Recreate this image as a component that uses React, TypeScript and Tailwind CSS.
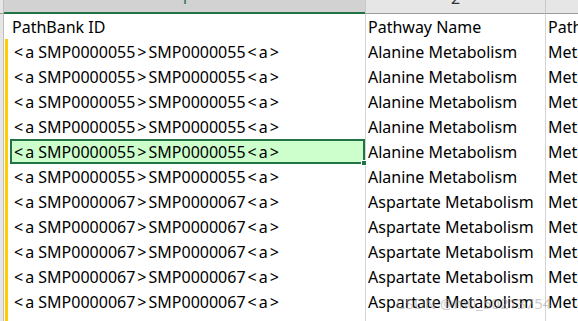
const rows = [
  { id: '55', name: 'Alanine Metabolism' },
  { id: '55', name: 'Alanine Metabolism' },
  { id: '55', name: 'Alanine Metabolism' },
  { id: '55', name: 'Alanine Metabolism' },
  { id: '55', name: 'Alanine Metabolism', selected: true },
  { id: '55', name: 'Alanine Metabolism' },
  { id: '67', name: 'Aspartate Metabolism' },
  { id: '67', name: 'Aspartate Metabolism' },
  { id: '67', name: 'Aspartate Metabolism' },
  { id: '67', name: 'Aspartate Metabolism' },
  { id: '67', name: 'Aspartate Metabolism' },
  { id: '67', name: 'Aspartate Metabolism' },
]

const B = ({ c }: { c: string }) => <span className="px-[2px]">{c}</span>

export default function App() {
  return (
    <div
      className="relative w-[578px] h-[321px] overflow-hidden bg-white text-black text-[16px]"
      style={{ fontFamily: '"Noto Sans", "Noto Sans CJK SC", sans-serif' }}
    >
      {/* Column headers */}
      <div className="flex h-[14px]">
        <div className="w-[4px] bg-[#e6e6e6] border-r border-[#bfbfbf] border-b border-b-[#9b9b9b]" />
        <div className="w-[361px] bg-[#d2d2d2] border-b-2 border-[#217346] overflow-hidden flex justify-center">
          <span className="leading-none text-[#217346] -mt-[10px]">1</span>
        </div>
        <div className="w-[180px] bg-[#e6e6e6] border-l border-[#c8c8c8] border-b border-b-[#9b9b9b] overflow-hidden flex justify-center">
          <span className="leading-none text-[#333] -mt-[10px]">2</span>
        </div>
        <div className="flex-1 bg-[#e6e6e6] border-l border-[#c8c8c8] border-b border-b-[#9b9b9b]" />
      </div>

      {/* Title row */}
      <div className="flex h-[25px] items-center">
        <div className="w-[4px] h-full bg-[#e6e6e6] border-r border-[#bfbfbf]" />
        <div className="w-[361px] h-full pl-[8px] flex items-center whitespace-nowrap">PathBank ID</div>
        <div className="w-[180px] h-full border-l border-[#d4d4d4] pl-[2px] flex items-center whitespace-nowrap overflow-hidden">Pathway Name</div>
        <div className="flex-1 h-full border-l border-[#d4d4d4] pl-[2px] flex items-center whitespace-nowrap overflow-hidden">Pathway</div>
      </div>

      {rows.map((r, i) => (
        <div key={i} className="flex h-[25px]">
          <div className="w-[4px] h-full bg-[#e6e6e6] border-r border-[#bfbfbf]" />
          <div className="w-[6px] h-full pl-[1px]">
            <div className="w-[3px] h-full bg-[#ffcc00]" />
          </div>
          <div
            className={
              r.selected
                ? 'relative w-[355px] h-full bg-[#ccffcc] border-2 border-[#217346] flex items-center whitespace-nowrap'
                : 'w-[355px] h-full pl-[2px] flex items-center whitespace-nowrap'
            }
          >
            <B c="<" />a SMP00000{r.id}<B c=">" />SMP00000{r.id}<B c="<" />a<B c=">" />
            {r.selected && (
              <div className="absolute -right-[4px] -bottom-[4px] w-[6px] h-[6px] bg-[#217346] border border-white" />
            )}
          </div>
          <div className="w-[180px] h-full border-l border-[#d4d4d4] pl-[2px] flex items-center whitespace-nowrap overflow-hidden">
            {r.name}
          </div>
          <div className="flex-1 h-full border-l border-[#d4d4d4] pl-[2px] flex items-center whitespace-nowrap overflow-hidden">
            Metabolic
          </div>
        </div>
      ))}

      {/* watermark */}
      <div className="absolute left-[396px] top-[292px] text-[15px] text-[#9a9a9a] opacity-50 whitespace-nowrap">
        CSDN @m0_50213754
      </div>
    </div>
  )
}
